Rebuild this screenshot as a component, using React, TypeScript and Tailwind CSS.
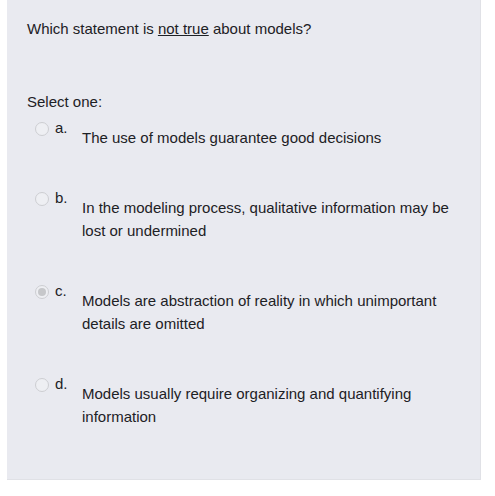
const options = [
  { letter: 'a.', text: 'The use of models guarantee good decisions', checked: false },
  { letter: 'b.', text: 'In the modeling process, qualitative information may be lost or undermined', checked: false },
  { letter: 'c.', text: 'Models are abstraction of reality in which unimportant details are omitted', checked: true },
  { letter: 'd.', text: 'Models usually require organizing and quantifying information', checked: false },
];

function Radio({ checked }: { checked: boolean }) {
  return (
    <span className="mt-[4px] flex h-[14px] w-[14px] shrink-0 items-center justify-center rounded-full border border-[#cdced2] bg-[#eeeff3]">
      {checked && <span className="h-[8px] w-[8px] rounded-full bg-[#c6c7ca]" />}
    </span>
  );
}

export default function App() {
  return (
    <div className="min-h-screen bg-white text-[15px] text-[#1d2125]" style={{ fontFamily: 'Arial, "Liberation Sans", sans-serif' }}>
      <div className="ml-[7px] h-[480px] w-[474px] border-r border-b border-[#e0e1e6] bg-[#e9eaf0] px-5 pt-[17px]">
        <p className="leading-[23px]">
          Which statement is <u>not true</u> about models?
        </p>
        <div className="mt-[50px] leading-[23px]">Select one:</div>
        <div className="mt-[5px] flex flex-col gap-[39px]">
          {options.map((o) => (
            <div key={o.letter} className="flex items-start">
              <span className="ml-2">
                <Radio checked={o.checked} />
              </span>
              <span className="ml-[6px] w-[27px] shrink-0 leading-[20px]">{o.letter}</span>
              <span className="flex-1 pt-2 leading-[23px]">{o.text}</span>
            </div>
          ))}
        </div>
      </div>
    </div>
  );
}
